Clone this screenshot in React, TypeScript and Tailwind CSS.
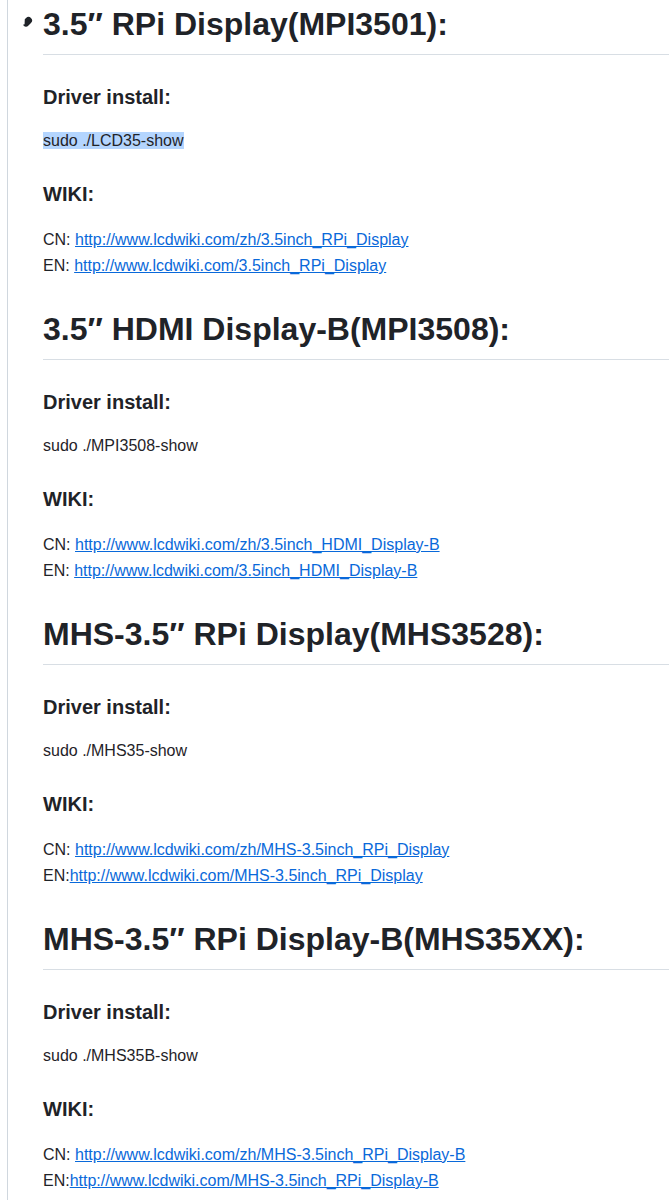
const sections = [
  {
    title: "3.5\u2033 RPi Display(MPI3501):",
    cmd: "sudo ./LCD35-show",
    selected: true,
    cn: "http://www.lcdwiki.com/zh/3.5inch_RPi_Display",
    en: "http://www.lcdwiki.com/3.5inch_RPi_Display",
    space: true,
  },
  {
    title: "3.5\u2033 HDMI Display-B(MPI3508):",
    cmd: "sudo ./MPI3508-show",
    cn: "http://www.lcdwiki.com/zh/3.5inch_HDMI_Display-B",
    en: "http://www.lcdwiki.com/3.5inch_HDMI_Display-B",
    space: true,
  },
  {
    title: "MHS-3.5\u2033 RPi Display(MHS3528):",
    cmd: "sudo ./MHS35-show",
    cn: "http://www.lcdwiki.com/zh/MHS-3.5inch_RPi_Display",
    en: "http://www.lcdwiki.com/MHS-3.5inch_RPi_Display",
    space: false,
  },
  {
    title: "MHS-3.5\u2033 RPi Display-B(MHS35XX):",
    cmd: "sudo ./MHS35B-show",
    cn: "http://www.lcdwiki.com/zh/MHS-3.5inch_RPi_Display-B",
    en: "http://www.lcdwiki.com/MHS-3.5inch_RPi_Display-B",
    space: false,
  },
];

const LinkIcon = () => (
  <svg viewBox="0 0 16 16" className="h-4 w-4 fill-[#1f2328]">
    <path d="m7.775 3.275 1.25-1.25a3.5 3.5 0 1 1 4.95 4.95l-2.5 2.5a3.5 3.5 0 0 1-4.95 0 .751.751 0 0 1 .018-1.042.751.751 0 0 1 1.042-.018 1.998 1.998 0 0 0 2.830l2.5-2.5a2.002 2.002 0 0 0-2.83-2.83l-1.25 1.25a.751.751 0 0 1-1.042-.018.751.751 0 0 1-.018-1.042Zm-4.69 9.64a1.998 1.998 0 0 0 2.83 0l1.25-1.25a.751.751 0 0 1 1.042.018.751.751 0 0 1 .018 1.042l-1.25 1.25a3.5 3.5 0 1 1-4.95-4.95l2.5-2.5a3.5 3.5 0 0 1 4.950 .751.751 0 0 1-.018 1.042.751.751 0 0 1-1.042.018 1.998 1.998 0 0 0-2.83 0l-2.5 2.5a1.998 1.998 0 0 0 0 2.83Z" />
  </svg>
);

export default function App() {
  return (
    <div className="min-h-[1200px] bg-white font-[family-name:Liberation_Sans,Arial,sans-serif] text-[#1f2328]">
      <div className="ml-[7px] min-h-[1200px] border-l border-[#d0d7de] pl-[35px] pt-[4px]">
        {sections.map((s, i) => (
          <section key={s.title} className={i > 0 ? "mt-[30px]" : ""}>
            <div className="relative border-b border-[#d8dee4] pb-[10px]">
              {i === 0 && (
                <span className="absolute -left-[26px] top-[12px]">
                  <LinkIcon />
                </span>
              )}
              <h2 className="text-[32px] font-bold leading-[40px]">{s.title}</h2>
            </div>
            <h3 className="mt-[28px] text-[20px] font-bold leading-[28px]">Driver install:</h3>
            <p className="mt-[18px] text-[16px] leading-[24px]">
              <span className={s.selected ? "bg-[#b4d5fe]" : ""}>{s.cmd}</span>
            </p>
            <h3 className="mt-[27px] text-[20px] font-bold leading-[28px]">WIKI:</h3>
            <p className="mt-[19px] text-[16px] leading-[26px]">
              CN:{" "}
              <a className="text-[#0969da] underline" href="#">{s.cn}</a>
              <br />
              EN:{s.space ? " " : ""}
              <a className="text-[#0969da] underline" href="#">{s.en}</a>
            </p>
          </section>
        ))}
      </div>
    </div>
  );
}
